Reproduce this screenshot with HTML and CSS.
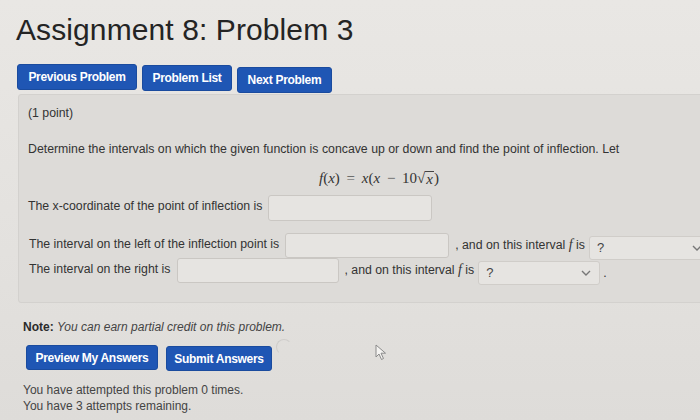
FILE: index.html
```html
<!DOCTYPE html>
<html>
<head>
<meta charset="utf-8">
<link rel="stylesheet" href="styles.css">
</head>
<body>
<div class="page">
  <h1 class="title">Assignment 8: Problem 3</h1>
  <div class="nav">
    <span class="btn btn-prev">Previous Problem</span>
    <span class="btn btn-list">Problem List</span>
    <span class="btn btn-next">Next Problem</span>
  </div>
  <div class="panel">
    <p class="points">(1 point)</p>
    <p class="intro">Determine the intervals on which the given function is concave up or down and find the point of inflection. Let</p>
    <div class="formula"><span class="mi">f</span>(<span class="mi">x</span>) <span class="op">=</span> <span class="mi">x</span>(<span class="mi">x</span> <span class="op">&minus;</span> 10<span class="sqrt"><span class="rad">&radic;</span><span class="under"><span class="mi">x</span></span></span>)</div>
    <div class="row first"><span class="lbl">The x-coordinate of the point of inflection is</span><span class="inp w164 h26"></span></div>
    <div class="pair">
      <div class="row"><span class="lbl">The interval on the left of the inflection point is</span><span class="inp w164"></span><span class="lbl2">, and on this interval <span class="fi">f</span> is</span><span class="sel sel1"><span class="q">?</span><svg class="chev" width="10" height="6" viewBox="0 0 10 6"><path d="M1 1 L5 5 L9 1" fill="none" stroke="#777" stroke-width="1.4"/></svg></span></div>
      <div class="row"><span class="lbl">The interval on the right is</span><span class="inp w162"></span><span class="lbl2">, and on this interval <span class="fi">f</span> is</span><span class="sel"><span class="q">?</span><svg class="chev" width="10" height="6" viewBox="0 0 10 6"><path d="M1 1 L5 5 L9 1" fill="none" stroke="#777" stroke-width="1.4"/></svg></span><span class="dot">.</span></div>
    </div>
  </div>
  <div class="footer">
    <p class="note"><b>Note:</b> <i>You can earn partial credit on this problem.</i></p>
    <div class="actions">
      <span class="btn btn-preview">Preview My Answers</span>
      <span class="btn btn-submit">Submit Answers</span>
      <span class="spinner"></span>
    </div>
    <p class="info">You have attempted this problem 0 times.<br>You have 3 attempts remaining.</p>
  </div>
  <svg class="cursor" width="12" height="17" viewBox="0 0 12 17"><path d="M1 1 L1 13 L4 10 L6.5 15.5 L8.5 14.5 L6 9.2 L10.5 9.2 Z" fill="#f4f3f1" stroke="#8a8a8a" stroke-width="1"/></svg>
</div>
</body>
</html>
```
FILE: styles.css
```css
html, body {
  margin: 0;
  padding: 0;
  background: #e4e2df;
  overflow: hidden;
}
.page {
  position: relative;
  width: 700px;
  height: 420px;
  padding: 13px 0 0 16px;
  box-sizing: border-box;
  font-family: "Liberation Sans", Arial, sans-serif;
  color: #333;
  background: linear-gradient(180deg, #e9e7e4 0%, #e3e1de 60%, #dedcd9 100%);
}
.title {
  margin: 0;
  font-size: 30px;
  font-weight: normal;
  line-height: 34px;
  color: #242424;
  letter-spacing: 0.1px;
}
.nav {
  display: flex;
  gap: 5px;
  margin-top: 17px;
  padding-left: 1px;
}
.btn {
  display: inline-flex;
  align-items: center;
  justify-content: center;
  height: 26px;
  box-sizing: border-box;
  background: #1f56b4;
  border: 1px solid #1a4b9e;
  border-radius: 3px;
  color: #fff;
  font-size: 12px;
  font-weight: bold;
  letter-spacing: -0.3px;
}
.btn-prev { width: 120px; }
.btn-list { width: 90px; margin-top: 1px; }
.btn-next { width: 95px; margin-top: 3px; }
.panel {
  margin-top: 1px;
  margin-left: 2px;
  width: 722px;
  box-sizing: border-box;
  padding: 10px 10px 19px 8px;
  background: #dddbd8;
  border: 1px solid #d3d1ce;
  border-radius: 3px;
  font-size: 12.3px;
}
.panel p { margin: 0; }
.points {
  line-height: 16px;
  padding-left: 1px;
}
.intro {
  margin-top: 20px !important;
  line-height: 16px;
  padding-left: 1px;
}
.formula {
  margin-top: 11px;
  text-align: center;
  font-family: "Liberation Serif", "Times New Roman", serif;
  font-size: 15px;
  line-height: 20px;
  color: #333;
  padding-left: 2px;
}
.mi { font-style: italic; }
.op { padding: 0 3px; color: #555; }
.sqrt { display: inline-flex; align-items: flex-end; }
.rad { font-size: 15px; line-height: 18px; }
.under { border-top: 1px solid #444; line-height: 15px; padding: 0 1px; }
.row {
  display: flex;
  align-items: center;
  height: 25px;
  white-space: nowrap;
  padding-left: 2px;
}
.row.first {
  height: 26px;
  margin-top: 7px;
  padding-left: 1px;
}
.row .lbl { margin-top: -4px; }
.pair { margin-top: 12px; }
.inp {
  display: block;
  flex: none;
  height: 25px;
  box-sizing: border-box;
  background: #e6e4e1;
  border: 1px solid #cac7c3;
  border-radius: 3px;
  margin-left: 6px;
}
.w164 { width: 164px; }
.w162 { width: 162px; }
.h26 { height: 26px; }
.lbl2 { margin-left: 6px; margin-top: -2px; }
.fi {
  font-family: "Liberation Serif", "Times New Roman", serif;
  font-style: italic;
  font-size: 14px;
}
.sel {
  display: flex;
  flex: none;
  align-items: center;
  justify-content: space-between;
  width: 122px;
  height: 24px;
  box-sizing: border-box;
  padding: 0 8px 0 7px;
  background: #e6e4e1;
  border: 1px solid #d0cdc9;
  border-radius: 3px;
  margin-left: 4px;
  margin-top: 4px;
  font-size: 13px;
  color: #444;
}
.dot { margin-left: 3px; margin-top: 4px; }
.footer {
  padding-left: 7px;
}
.footer p { margin: 0; }
.note {
  margin-top: 16px !important;
  font-size: 12px;
  line-height: 16px;
  color: #333;
}
.note b { color: #2b2b2b; }
.note i { color: #444; }
.actions {
  display: flex;
  gap: 8px;
  margin-top: 10px;
  padding-left: 3px;
  position: relative;
}
.btn-preview { width: 132px; height: 25px; }
.btn-submit { width: 106px; height: 25px; margin-top: 1px; }
.spinner {
  position: absolute;
  left: 253px;
  top: -6px;
  width: 14px;
  height: 14px;
  border-radius: 50%;
  border: 1px solid transparent;
  border-top-color: #cfcdca;
  border-left-color: #cfcdca;
}
.info {
  margin-top: 11px !important;
  font-size: 12px;
  line-height: 16px;
  color: #444;
}
.cursor {
  position: absolute;
  left: 375px;
  top: 344px;
}
```
